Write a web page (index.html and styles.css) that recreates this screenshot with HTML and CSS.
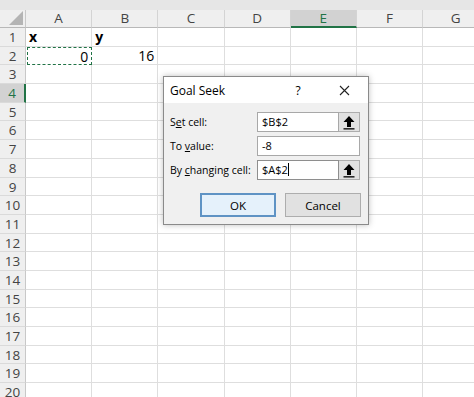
FILE: index.html
```html
<!DOCTYPE html>
<html lang="en">
<head>
  <meta charset="UTF-8">
  <title>Goal Seek</title>
  <link rel="stylesheet" href="styles.css">
</head>
<body>
  <div class="topband"></div>

  <div class="sheet">
    <div class="corner"><span class="tri"></span></div>
    <div class="colhead">A</div>
    <div class="colhead">B</div>
    <div class="colhead">C</div>
    <div class="colhead">D</div>
    <div class="colhead sel">E</div>
    <div class="colhead">F</div>
    <div class="colhead">G</div>

    <div class="rowhead">1</div><div class="cell bold">x</div><div class="cell bold">y</div><div class="cell"></div><div class="cell"></div><div class="cell"></div><div class="cell"></div><div class="cell"></div>
    <div class="rowhead">2</div><div class="cell num ants">0</div><div class="cell num">16</div><div class="cell"></div><div class="cell"></div><div class="cell"></div><div class="cell"></div><div class="cell"></div>
    <div class="rowhead">3</div><div class="cell"></div><div class="cell"></div><div class="cell"></div><div class="cell"></div><div class="cell"></div><div class="cell"></div><div class="cell"></div>
    <div class="rowhead sel">4</div><div class="cell"></div><div class="cell"></div><div class="cell"></div><div class="cell"></div><div class="cell"></div><div class="cell"></div><div class="cell"></div>
    <div class="rowhead">5</div><div class="cell"></div><div class="cell"></div><div class="cell"></div><div class="cell"></div><div class="cell"></div><div class="cell"></div><div class="cell"></div>
    <div class="rowhead">6</div><div class="cell"></div><div class="cell"></div><div class="cell"></div><div class="cell"></div><div class="cell"></div><div class="cell"></div><div class="cell"></div>
    <div class="rowhead">7</div><div class="cell"></div><div class="cell"></div><div class="cell"></div><div class="cell"></div><div class="cell"></div><div class="cell"></div><div class="cell"></div>
    <div class="rowhead">8</div><div class="cell"></div><div class="cell"></div><div class="cell"></div><div class="cell"></div><div class="cell"></div><div class="cell"></div><div class="cell"></div>
    <div class="rowhead">9</div><div class="cell"></div><div class="cell"></div><div class="cell"></div><div class="cell"></div><div class="cell"></div><div class="cell"></div><div class="cell"></div>
    <div class="rowhead">10</div><div class="cell"></div><div class="cell"></div><div class="cell"></div><div class="cell"></div><div class="cell"></div><div class="cell"></div><div class="cell"></div>
    <div class="rowhead">11</div><div class="cell"></div><div class="cell"></div><div class="cell"></div><div class="cell"></div><div class="cell"></div><div class="cell"></div><div class="cell"></div>
    <div class="rowhead">12</div><div class="cell"></div><div class="cell"></div><div class="cell"></div><div class="cell"></div><div class="cell"></div><div class="cell"></div><div class="cell"></div>
    <div class="rowhead">13</div><div class="cell"></div><div class="cell"></div><div class="cell"></div><div class="cell"></div><div class="cell"></div><div class="cell"></div><div class="cell"></div>
    <div class="rowhead">14</div><div class="cell"></div><div class="cell"></div><div class="cell"></div><div class="cell"></div><div class="cell"></div><div class="cell"></div><div class="cell"></div>
    <div class="rowhead">15</div><div class="cell"></div><div class="cell"></div><div class="cell"></div><div class="cell"></div><div class="cell"></div><div class="cell"></div><div class="cell"></div>
    <div class="rowhead">16</div><div class="cell"></div><div class="cell"></div><div class="cell"></div><div class="cell"></div><div class="cell"></div><div class="cell"></div><div class="cell"></div>
    <div class="rowhead">17</div><div class="cell"></div><div class="cell"></div><div class="cell"></div><div class="cell"></div><div class="cell"></div><div class="cell"></div><div class="cell"></div>
    <div class="rowhead">18</div><div class="cell"></div><div class="cell"></div><div class="cell"></div><div class="cell"></div><div class="cell"></div><div class="cell"></div><div class="cell"></div>
    <div class="rowhead">19</div><div class="cell"></div><div class="cell"></div><div class="cell"></div><div class="cell"></div><div class="cell"></div><div class="cell"></div><div class="cell"></div>
    <div class="rowhead">20</div><div class="cell"></div><div class="cell"></div><div class="cell"></div><div class="cell"></div><div class="cell"></div><div class="cell"></div><div class="cell"></div>
  </div>

  <div class="dialog">
    <div class="titlebar">
      <span class="title">Goal Seek</span>
      <span class="help">?</span>
      <span class="close"><svg width="11" height="11" viewBox="0 0 11 11"><path d="M1 1 L10 10 M10 1 L1 10" stroke="#222" stroke-width="1.1" fill="none"/></svg></span>
    </div>
    <div class="dlg-body">
      <div class="field">
        <label>S<u>e</u>t cell:</label>
        <div class="input">$B$2</div>
        <button class="pick"><svg width="12" height="15" viewBox="0 0 12 15"><path d="M6 1 L11.5 7 L8 7 L8 12 L4 12 L4 7 L0.5 7 Z" fill="#000"/><rect x="0.5" y="13.2" width="11" height="1.3" fill="#000"/></svg></button>
      </div>
      <div class="field">
        <label>To <u>v</u>alue:</label>
        <div class="input wide">-8</div>
      </div>
      <div class="field">
        <label>By <u>c</u>hanging cell:</label>
        <div class="input focus">$A$2<span class="caret"></span></div>
        <button class="pick"><svg width="12" height="15" viewBox="0 0 12 15"><path d="M6 1 L11.5 7 L8 7 L8 12 L4 12 L4 7 L0.5 7 Z" fill="#000"/><rect x="0.5" y="13.2" width="11" height="1.3" fill="#000"/></svg></button>
      </div>
      <div class="actions">
        <button class="btn default">OK</button>
        <button class="btn">Cancel</button>
      </div>
    </div>
  </div>
</body>
</html>
```

FILE: styles.css
```css
body {
  margin: 0;
  width: 474px;
  height: 397px;
  overflow: hidden;
  background: #fff;
  font-family: 'Open Sans', 'Noto Sans', sans-serif;
  position: relative;
}
.topband {
  height: 10px;
  background: #e6e6e6;
}
.sheet {
  display: grid;
  grid-template-columns: 26px repeat(7, 66.2px);
  grid-template-rows: 18px repeat(20, 18.7px);
}
.corner {
  background: #efefef;
  border-right: 1px solid #c8c8c8;
  border-bottom: 1px solid #b8b8b8;
  box-sizing: border-box;
  position: relative;
}
.tri {
  position: absolute;
  right: 2px;
  bottom: 2px;
  width: 0;
  height: 0;
  border-left: 14px solid transparent;
  border-bottom: 14px solid #b4b4b4;
}
.colhead {
  background: #efefef;
  border-right: 1px solid #d4d4d4;
  border-bottom: 1px solid #b8b8b8;
  box-sizing: border-box;
  color: #444;
  font-size: 13.5px;
  line-height: 17px;
  text-align: center;
}
.colhead.sel {
  background: #d2d2d2;
  border-bottom: 2px solid #217346;
  color: #217346;
}
.rowhead {
  background: #efefef;
  border-right: 1px solid #c8c8c8;
  border-bottom: 1px solid #dadada;
  box-sizing: border-box;
  color: #444;
  font-size: 13.5px;
  line-height: 18px;
  text-align: center;
}
.rowhead.sel {
  background: #d2d2d2;
  border-right: 2px solid #217346;
  color: #217346;
}
.cell {
  border-right: 1px solid #dedede;
  border-bottom: 1px solid #dedede;
  box-sizing: border-box;
  font-size: 14px;
  line-height: 18px;
  padding: 0 3px;
  color: #000;
}
.bold {
  font-weight: bold;
}
.num {
  text-align: right;
}
.ants {
  border: 1px dashed #217346;
  margin: 0 0 0 1px;
}

/* dialog */
.dialog {
  position: absolute;
  left: 163px;
  top: 76px;
  width: 206px;
  height: 149px;
  box-sizing: border-box;
  border: 1px solid #8a8a8a;
  background: #f0f0f0;
  box-shadow: 0 0 6px rgba(0, 0, 0, 0.25);
  font-family: 'Open Sans', 'Noto Sans', sans-serif;
  font-size: 10.5px;
  color: #000;
}
.titlebar {
  height: 26px;
  background: #fff;
  display: flex;
  align-items: center;
  padding: 0 0 0 6px;
}
.title {
  font-size: 12px;
  flex: 1;
}
.help {
  font-size: 12px;
  width: 20px;
  text-align: center;
  margin-right: 26px;
}
.close {
  width: 20px;
  height: 11px;
  display: flex;
  justify-content: center;
  margin-right: 14px;
}
.dlg-body {
  padding: 9px 7px 0 6px;
  display: flex;
  flex-direction: column;
  gap: 4px;
}
.field {
  display: flex;
  align-items: center;
  height: 20px;
}
.field label {
  width: 87px;
  white-space: nowrap;
}
.input {
  width: 82px;
  height: 20px;
  box-sizing: border-box;
  background: #fff;
  border: 1px solid #a8a8a8;
  padding: 0 4px;
  line-height: 18px;
  font-size: 11px;
}
.input.wide {
  width: 103px;
}
.input.focus {
  border-color: #8e8e8e;
}
.caret {
  display: inline-block;
  width: 1px;
  height: 13px;
  background: #000;
  vertical-align: -2px;
}
.pick {
  width: 21px;
  height: 20px;
  box-sizing: border-box;
  margin: 0;
  padding: 0;
  background: #e1e1e1;
  border: 1px solid #adadad;
  border-left: none;
  display: flex;
  align-items: center;
  justify-content: center;
}
.actions {
  display: flex;
  justify-content: flex-end;
  gap: 9px;
  margin-top: 9px;
}
.btn {
  width: 76px;
  height: 24px;
  box-sizing: border-box;
  background: #e1e1e1;
  border: 1px solid #adadad;
  font-family: inherit;
  font-size: 11.5px;
  color: #000;
  padding: 0;
}
.btn.default {
  border: 2px solid #5f93c4;
  background: #e5f1fb;
}
```
